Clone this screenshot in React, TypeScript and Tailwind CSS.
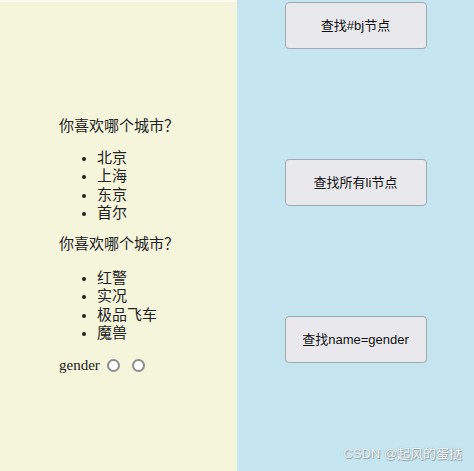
import React from 'react';

const serif = { fontFamily: '"Liberation Serif", "Noto Sans CJK SC", serif' };
const sans = { fontFamily: '"Liberation Sans", "Noto Sans CJK SC", sans-serif' };

const groups = [
  ['北京', '上海', '东京', '首尔'],
  ['红警', '实况', '极品飞车', '魔兽'],
];

const buttons = ['查找#bj节点', '查找所有li节点', '查找name=gender'];

const Radio = () => (
  <span className="inline-block w-[13px] h-[13px] rounded-full border-2 border-[#8d8d8d] bg-white ml-[7px] mr-[5px]" />
);

export default function App() {
  return (
    <div className="relative flex w-[474px] h-[471px] overflow-hidden">
      <div
        className="w-[237px] h-full bg-[#f5f5dc] border-t-2 border-[#fbfbee] pt-[115px] pl-[59px] text-[15px] leading-[18.6px] text-[#222]"
        style={serif}
      >
        {groups.map((items, i) => (
          <div key={i}>
            <p>你喜欢哪个城市？</p>
            <ul className={`list-disc pl-[38px] mb-[12px] ${i === 0 ? 'mt-[13px]' : 'mt-[15px]'}`}>
              {items.map((c) => (
                <li key={c}>{c}</li>
              ))}
            </ul>
          </div>
        ))}
        <div className="flex items-center mt-[13px]">
          <span>gender</span>
          <Radio />
          <Radio />
        </div>
      </div>
      <div className="flex-1 h-full bg-[#c5e6f0] flex flex-col items-center pt-[2px]">
        {buttons.map((b, i) => (
          <button
            key={b}
            className={`w-[142px] h-[47px] bg-[#e9e9ed] border border-[#a3a8b0] rounded-[4px] text-[13px] text-[#111] ${i > 0 ? 'mt-[110px]' : ''}`}
            style={sans}
          >
            {b}
          </button>
        ))}
      </div>
      <div
        className="absolute right-[12px] bottom-[8px] text-[13px] text-[#f4f8fa] [text-shadow:0_0_1px_#8a9aa3,1px_1px_1px_#8a9aa3]"
        style={sans}
      >
        CSDN @起风的蛋挞
      </div>
    </div>
  );
}
